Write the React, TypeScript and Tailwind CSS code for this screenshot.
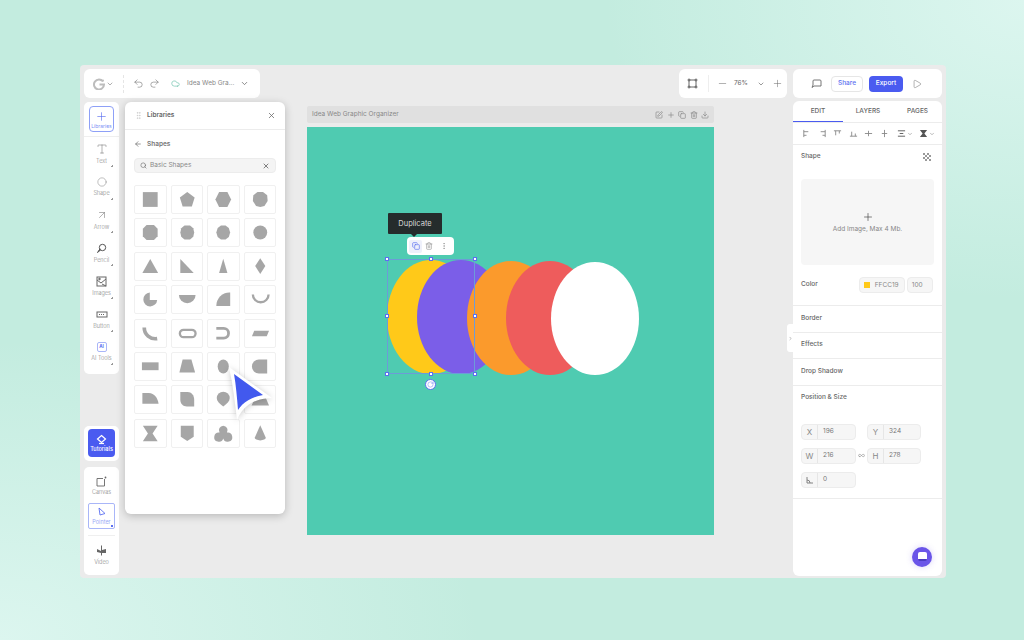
import React from "react";
import { Plus, Type, Circle, ArrowUpRight, X, ArrowLeft, Search, ChevronDown, ChevronRight, Undo2, Redo2, Cloud, Minus, Play, Copy, Trash2, MoreVertical, SquarePen, Download, GripVertical, Infinity as Inf, RotateCw } from "lucide-react";

const G = "#a6a6a6";
const shapes: React.ReactNode[] = [
  <rect x="8.5" y="6.5" width="16" height="16" fill={G} />,
  <polygon points="16.5,6.5 24.5,12.3 21.5,22 11.5,22 8.5,12.3" fill={G} />,
  <polygon points="12,6.5 21,6.5 25,14.5 21,22.5 12,22.5 8,14.5" fill={G} />,
  <polygon points="13.5,6.5 19.5,6.5 24,10 24.5,16 21,21.5 16.5,22.5 12,21.5 8.5,16 9,10" fill={G} />,
  <polygon points="12.5,6.5 20.5,6.5 24.5,10.5 24.5,18.5 20.5,22.5 12.5,22.5 8.5,18.5 8.5,10.5" fill={G} />,
  <polygon points="13.5,7 19.5,7 23,10 24,14.5 23,19 19.5,22 13.5,22 10,19 9,14.5 10,10" fill={G} />,
  <polygon points="14,7 19,7 22.5,9.5 24,14.5 22.5,19.5 19,22 14,22 10.5,19.5 9,14.5 10.5,9.5" fill={G} />,
  <circle cx="16.5" cy="14.5" r="7.5" fill={G} />,
  <polygon points="16.5,6.5 25,21.5 8,21.5" fill={G} />,
  <polygon points="9,6.5 23.5,21.5 9,21.5" fill={G} />,
  <polygon points="16.5,6 21,21.5 12,21.5" fill={G} />,
  <polygon points="16.5,5.5 22,14 16.5,22.5 11,14" fill={G} />,
  <path d="M16 7 A7.5 7.5 0 1 0 24 15 H16 Z" fill={G} />,
  <path d="M7.5 9.5 H25.5 A9 9 0 0 1 7.5 9.5 Z" fill={G} />,
  <path d="M9 21.5 A14 14 0 0 1 24 7 V21.5 Z" fill={G} />,
  <path d="M8.5 9 A8.5 8.5 0 0 0 25.5 9" fill="none" stroke={G} strokeWidth="2.5" />,
  <path d="M10 8 A12 12 0 0 0 24 20" fill="none" stroke={G} strokeWidth="4" />,
  <rect x="8.5" y="10.5" width="17" height="8" rx="4" fill="none" stroke={G} strokeWidth="2.5" />,
  <path d="M9 9 H17 A5.2 5.2 0 0 1 17 19.5 H9" fill="none" stroke={G} strokeWidth="3" />,
  <polygon points="10,11.5 26,11.5 23.5,17.5 7.5,17.5" fill={G} />,
  <rect x="7.5" y="10" width="18" height="8.5" fill={G} />,
  <polygon points="11.5,7 21,7 25,21 8,21" fill={G} />,
  <ellipse cx="16.5" cy="14.5" rx="6" ry="7.5" fill={G} />,
  <path d="M15 7 H24 V22 H15 A7.5 7.5 0 0 1 15 7 Z" fill={G} />,
  <path d="M8 7.5 H15 C21 7.5 24.5 13 25.5 19 H8 Z" fill={G} />,
  <path d="M9 6.5 H17 C21 6.5 24 10 24 15 V22 H16 C12 22 9 19 9 15 Z" fill={G} />,
  <path d="M16.5 22 C12 19 9.5 16.5 9.5 13 A7 7 0 0 1 23.5 13 C23.5 16.5 21 19 16.5 22 Z" fill={G} />,
  <polygon points="14,7 20,7 26,21 7,21" fill={G} />,
  <polygon points="8.5,6 24.5,6 19,14.5 24.5,23 8.5,23 14,14.5" fill={G} />,
  <polygon points="9.5,6 23.5,6 23.5,18 16.5,22.5 9.5,18" fill={G} />,
  <path d="M16.5 6 A5 5 0 0 1 20.5 13.5 A5 5 0 1 1 16.5 20 A5 5 0 1 1 12.5 13.5 A5 5 0 0 1 16.5 6 Z" fill={G} />,
  <path d="M16.5 5.5 L22.5 19 A6 3 0 0 1 10.5 19 Z" fill={G} />,
];

function Tool({ icon, label, corner = true }: { icon: React.ReactNode; label: string; corner?: boolean }) {
  return (
    <div className="relative flex h-[33px] flex-col items-center justify-center gap-[3px] pt-[2px] text-[#666]">
      {icon}
      <span className="text-[5.5px] font-light leading-[7px] text-[#888]">{label}</span>
      {corner && <span className="absolute bottom-[3px] right-[6px] h-[2px] w-[2px] border-b border-r border-[#999]" />}
    </div>
  );
}

function Section({ label }: { label: string }) {
  return (
    <div className="flex h-[26.5px] items-center border-b border-[#ececec] pl-2 text-[6.5px] font-medium text-[#666]">{label}</div>
  );
}

function Field({ k, v, w = "w-[55px]" }: { k: React.ReactNode; v: string; w?: string }) {
  return (
    <div className={`flex h-[16px] items-center rounded-[4px] border border-[#ececec] bg-[#f6f6f6] text-[6.5px] text-[#777] ${w}`}>
      <span className="flex h-full w-[16px] items-center justify-center border-r border-[#e6e6e6] text-[8px] text-[#888]">{k}</span>
      <span className="pl-[5px] pt-[1px]">{v}</span>
    </div>
  );
}

const PencilIcon = (
  <svg width="11" height="11" viewBox="0 0 11 11" fill="none" stroke="#555" strokeWidth="1">
    <circle cx="6.5" cy="4.5" r="3.2" />
    <path d="M4.5 7 L1.5 9.5 L4 5.8" fill="#555" />
  </svg>
);
const ImagesIcon = (
  <svg width="11" height="11" viewBox="0 0 11 11" fill="none" stroke="#666" strokeWidth="1">
    <rect x="1" y="1" width="9" height="9" />
    <path d="M1 4 L5 7 L10 3 M6 8 L10 10" />
    <circle cx="3.5" cy="3" r="0.8" fill="#666" />
  </svg>
);
const ButtonIcon = (
  <svg width="12" height="11" viewBox="0 0 12 11" fill="none" stroke="#666" strokeWidth="1">
    <rect x="1" y="3" width="10" height="5" />
    <path d="M3 5.5 H8" strokeDasharray="1 1" />
  </svg>
);
const CanvasIcon = (
  <svg width="11" height="11" viewBox="0 0 11 11" fill="none" stroke="#666" strokeWidth="0.9">
    <path d="M8.5 3 V10 H1 V2.5 H7" />
    <circle cx="9.5" cy="1.5" r="0.9" fill="#666" stroke="none" />
  </svg>
);
const VideoIcon = (
  <svg width="11" height="11" viewBox="0 0 11 11" fill="#666">
    <path d="M5 0.5 H6 V10.5 H5 Z M1 4 L5 6 V8 L1 7 Z M6 5 L10 4 V8 L6 8 Z" />
  </svg>
);
const TutorialIcon = (
  <svg width="11" height="11" viewBox="0 0 11 11" fill="none" stroke="#fff" strokeWidth="1.2">
    <path d="M5.5 1.5 L9.5 5 L5.5 8.5 L1.5 5 Z" />
    <path d="M3 9.5 H8" />
  </svg>
);
const CommentIcon = (
  <svg width="11" height="11" viewBox="0 0 11 11" fill="none" stroke="#666" strokeWidth="0.9">
    <path d="M3 2 H9 A1 1 0 0 1 10 3 V8 H3 L1 9.5 L2 7 V3 A1 1 0 0 1 3 2 Z" />
  </svg>
);
const FrameIcon = (
  <svg width="11" height="11" viewBox="0 0 11 11" fill="none" stroke="#666" strokeWidth="1">
    <rect x="2" y="2" width="7" height="7" />
    <path d="M0.5 2 H3.5 M2 0.5 V3.5 M7.5 2 H10.5 M9 0.5 V3.5 M0.5 9 H3.5 M2 7.5 V10.5 M7.5 9 H10.5 M9 7.5 V10.5" />
  </svg>
);

export default function App() {
  return (
    <div
      className="relative h-[640px] w-[1024px] overflow-hidden bg-[radial-gradient(ellipse_420px_300px_at_100%_0%,#dcf6ef_0%,rgba(220,246,239,0)_100%),radial-gradient(ellipse_480px_300px_at_0%_100%,#dcf6ef_0%,rgba(220,246,239,0)_100%),linear-gradient(#c3ecdf,#c3ecdf)] pl-[80px] pt-[65px]"
      style={{ fontFamily: "Inter, 'Liberation Sans', sans-serif" }}
    >
      <div className="relative flex h-[513px] w-[866px] flex-col gap-[4px] rounded-[4px] bg-[#ebebeb] px-[4px] pt-[4px]">
        {/* top bar */}
        <div className="flex h-[29px] shrink-0">
          <div className="flex w-[176px] items-center rounded-[6px] bg-white text-[#666]">
            <div className="flex w-[40px] items-center justify-center gap-[1px] border-r border-dashed border-[#e5e5e5] py-[3px]">
              <svg width="12" height="12" viewBox="0 0 24 24" fill="none"><path d="M20 7 A10 10 0 1 0 22 13 H13" stroke="#bdbdbd" strokeWidth="4" /><circle cx="20" cy="5" r="2" fill="#bdbdbd" /></svg>
              <ChevronDown size={8} color="#888" />
            </div>
            <div className="ml-[9px] flex gap-[5px]">
              <Undo2 size={11} strokeWidth={1.2} />
              <Redo2 size={11} strokeWidth={1.2} />
            </div>
            <Cloud size={9} className="ml-[11px]" color="#7cc8b4" strokeWidth={2} />
            <span className="ml-[7px] pt-[1px] text-[6.5px] text-[#888]">Idea Web Gra...</span>
            <ChevronDown size={9} className="ml-[6px]" color="#666" />
          </div>
          <div className="ml-[419px] flex w-[108px] items-center rounded-[6px] bg-white text-[#666]">
            <span className="ml-[8px]">{FrameIcon}</span>
            <div className="ml-[10px] h-[17px] border-l border-[#eee]" />
            <Minus size={11} className="ml-[8px]" strokeWidth={1.1} />
            <span className="ml-[6px] pt-[1px] text-[6.5px] font-normal text-[#666]">76%</span>
            <ChevronDown size={8} className="ml-[9px]" />
            <Plus size={11} className="ml-[7px]" strokeWidth={1.1} />
          </div>
          <div className="ml-[6px] flex w-[149px] items-center rounded-[6px] bg-white text-[#666]">
            <span className="ml-[18px]">{CommentIcon}</span>
            <div className="ml-[9px] flex h-[16px] w-[32px] items-center justify-center rounded-[4px] border border-[#e6e6e6] pt-[1px] text-[6.5px] font-medium text-[#5b6ff0]">Share</div>
            <div className="ml-[6px] flex h-[16px] w-[34px] items-center justify-center rounded-[4px] bg-[#4a5bf0] pt-[1px] text-[6.5px] font-medium text-white">Export</div>
            <Play size={10} className="ml-[9px]" strokeWidth={1.2} />
          </div>
        </div>

        {/* main */}
        <div className="relative flex min-h-0 flex-1">
          {/* left rail */}
          <div className="flex w-[35px] shrink-0 flex-col pb-[2px]">
            <div className="h-[272px] rounded-[5px] bg-white">
              <div className="border-b border-[#efefef] px-[5px] pb-[3.5px] pt-[4px]">
                <div className="flex h-[26px] flex-col items-center justify-center rounded-[4px] border border-[#8ea0f7] text-[#5b6ff0]">
                  <Plus size={13} strokeWidth={1.2} />
                  <span className="text-[5px] leading-[6px] text-[#7d8ff5]">Libraries</span>
                </div>
              </div>
              <div>
                <Tool icon={<Type size={12} strokeWidth={1} />} label="Text" />
                <Tool icon={<Circle size={10} strokeWidth={1} />} label="Shape" />
                <Tool icon={<ArrowUpRight size={12} strokeWidth={1} />} label="Arrow" />
                <Tool icon={PencilIcon} label="Pencil" />
                <Tool icon={ImagesIcon} label="Images" />
                <Tool icon={ButtonIcon} label="Button" />
                <Tool icon={<div className="flex h-[10px] w-[10px] items-center justify-center rounded-[2px] border border-[#a9b6f8] text-[4.5px] font-bold text-[#5b6ff0]">AI</div>} label="AI Tools" />
              </div>
            </div>
            <div className="mt-[52px] h-[35px] rounded-[5px] bg-white px-[4px] py-[3px]">
              <div className="flex h-[28px] flex-col items-center justify-center gap-[1px] rounded-[4px] bg-[#4a5bf0] text-white">
                {TutorialIcon}
                <span className="text-[5.5px] font-medium leading-[7px]">Tutorials</span>
              </div>
            </div>
            <div className="mt-[6px] h-[108px] rounded-[5px] bg-white px-[4px]">
              <div className="flex h-[36px] flex-col items-center justify-center gap-[2px] pt-[1px]">
                {CanvasIcon}
                <span className="text-[5.5px] font-light leading-[7px] text-[#888]">Canvas</span>
              </div>
              <div className="relative flex h-[26px] flex-col items-center justify-center gap-[2px] rounded-[2px] border border-[#a9b6f8]">
                <svg width="9" height="10" viewBox="0 0 9 10" fill="none" stroke="#5b6ff0" strokeWidth="0.9"><path d="M2 1 L8 6.5 L3 8 Z" /></svg>
                <span className="text-[5.5px] leading-[7px] text-[#9aa8f5]">Pointer</span>
                <span className="absolute bottom-[1px] right-[1px] h-[2px] w-[2px] bg-[#5b6ff0]" />
              </div>
              <div className="mt-[6px] flex h-[40px] flex-col items-center justify-center gap-[3px] border-t border-[#efefef]">
                {VideoIcon}
                <span className="text-[5.5px] font-light leading-[7px] text-[#888]">Video</span>
              </div>
            </div>
          </div>

          {/* libraries */}
          <div className="ml-[6px] h-[412px] w-[160px] shrink-0 rounded-[6px] bg-white shadow-[0_2px_8px_rgba(0,0,0,0.22)]">
            <div className="flex h-[28px] items-center border-b border-[#ececec] px-[9px]">
              <GripVertical size={9} color="#ccc" />
              <span className="ml-[4px] pt-[1px] text-[6.5px] font-semibold text-[#666]">Libraries</span>
              <X size={9} className="ml-auto" color="#666" />
            </div>
            <div className="flex h-[28px] items-center pl-[9px]">
              <ArrowLeft size={8} color="#666" />
              <span className="ml-[5px] pt-[1px] text-[6.5px] font-semibold text-[#777]">Shapes</span>
            </div>
            <div className="mx-[9px] flex h-[15px] items-center rounded-[4px] border border-[#ececec] bg-[#f4f4f4] px-[5px]">
              <Search size={7} color="#666" />
              <span className="ml-[3px] pt-[1px] text-[6.5px] text-[#888]">Basic Shapes</span>
              <X size={8} className="ml-auto" color="#444" />
            </div>
            <div className="mx-[9px] mt-[12px] grid w-[142px] grid-cols-4 gap-x-[4px] gap-y-[4.4px]">
              {shapes.map((sh, i) => (
                <div key={i} className="h-[29px] rounded-[2px] border border-[#f0f0f0] bg-white">
                  <svg viewBox="0 0 33 29" className="h-full w-full">{sh}</svg>
                </div>
              ))}
            </div>
          </div>

          {/* canvas column */}
          <div className="ml-[22px] flex w-[407px] shrink-0 flex-col pt-[4px]">
            <div className="flex h-[17px] items-center rounded-[2px] bg-[#e0e0e0] px-[5px] text-[#888]">
              <span className="pt-[1px] text-[6.5px] text-[#888]">Idea Web Graphic Organizer</span>
              <div className="ml-auto flex gap-[3.5px]">
                <SquarePen size={8} />
                <Plus size={8} />
                <Copy size={8} />
                <Trash2 size={8} />
                <Download size={8} />
              </div>
            </div>
            <div className="relative mt-[4px] h-[408px] bg-[#4fcbb1]">
              <div className="absolute left-[80px] top-[133px] h-[114px] w-[88px] rounded-[50%] bg-[#ffc919]" />
              <div className="absolute left-[110px] top-[133px] h-[114px] w-[88px] rounded-[50%] bg-[#7b5ee8]" />
              <div className="absolute left-[160px] top-[134px] h-[114px] w-[88px] rounded-[50%] bg-[#fb9a2c]" />
              <div className="absolute left-[199px] top-[134px] h-[114px] w-[88px] rounded-[50%] bg-[#ee5c5c]" />
              <div className="absolute left-[244px] top-[135px] h-[113px] w-[88px] rounded-[50%] bg-white" />
              {/* selection */}
              <div className="absolute left-[80px] top-[132px] h-[115px] w-[88px] border border-[#6d9bd8]" />
              {[[80, 132], [124, 132], [168, 132], [80, 189], [168, 189], [80, 247], [124, 247], [168, 247]].map(([x, y], i) => (
                <span key={i} className="absolute h-[4px] w-[4px] -translate-x-1/2 -translate-y-1/2 border border-[#5b6ff0] bg-white" style={{ left: x, top: y }} />
              ))}
              <div className="absolute left-[118px] top-[252px] flex h-[11px] w-[11px] items-center justify-center rounded-full border border-[#5b6ff0] bg-white">
                <RotateCw size={7} color="#5b6ff0" strokeWidth={1.5} />
              </div>
              {/* mini toolbar */}
              <div className="absolute left-[100px] top-[110px] flex h-[18px] w-[47px] items-center rounded-[4px] bg-white px-[2px]">
                <div className="flex h-[13px] w-[13px] items-center justify-center rounded-[2px] bg-[#eef0fb]"><Copy size={8} color="#5b6ff0" strokeWidth={2} /></div>
                <Trash2 size={8} color="#999" strokeWidth={2} className="ml-[3px]" />
                <MoreVertical size={8} color="#999" strokeWidth={2} className="ml-[7px]" />
              </div>
              {/* tooltip */}
              <div className="absolute left-[81px] top-[86px] flex h-[21px] w-[54px] items-center justify-center rounded-[1px] bg-[#252c2c] text-[7.5px] text-[#d8d8d8]">Duplicate</div>
              <div className="absolute left-[104px] top-[107px] h-0 w-0 border-x-[3px] border-t-[3px] border-x-transparent border-t-[#252c2c]" />
            </div>
          </div>

          {/* right panel */}
          <div className="ml-[79px] -mt-[1px] flex h-[475px] w-[149px] shrink-0 flex-col rounded-[6px] bg-white">
            <div className="flex h-[22px] shrink-0 border-b border-[#ececec] text-[6.5px] font-medium text-[#666]">
              <div className="flex w-[50px] items-center justify-center border-b border-[#4a5bf0] pt-[1px]">EDIT</div>
              <div className="flex w-[50px] items-center justify-center pt-[1px]">LAYERS</div>
              <div className="flex w-[49px] items-center justify-center pt-[1px]">PAGES</div>
            </div>
            <div className="flex h-[22px] shrink-0 items-center gap-[6.5px] border-b border-[#ececec] pl-[9px] text-[#777]">
              {["M2 1 V9 M2 3 H7 M2 7 H5", "M8 1 V9 M8 3 H3 M8 7 H5", "M1 2 H9 M3 2 V7 M7 2 V5", "M1 8 H9 M3 8 V3 M7 8 V5", "M1 5 H9 M5 2 V8", "M5 1 V9 M2 5 H8"].map((d, i) => (
                <svg key={i} width="9" height="9" viewBox="0 0 10 10" fill="none" stroke="#888" strokeWidth="1"><path d={d} /></svg>
              ))}
              <svg className="ml-[2px]" width="9" height="9" viewBox="0 0 10 10" fill="none" stroke="#555" strokeWidth="1"><path d="M1 2 H9 M1 8 H9 M3 5 H7" /></svg>
              <ChevronDown size={6} className="-ml-[6px]" />
              <svg width="9" height="9" viewBox="0 0 10 10" fill="#555"><path d="M1 1 H9 L6 5 L9 9 H1 L4 5 Z" /></svg>
              <ChevronDown size={6} className="-ml-[6px]" />
            </div>
            <div className="flex h-[24px] shrink-0 items-center justify-between pl-2 pr-[11px] text-[6.5px] font-medium text-[#666]">
              Shape
              <svg width="8" height="8" viewBox="0 0 8 8" fill="#999"><path d="M0 0h2v2H0zM4 0h2v2H4zM2 2h2v2H2zM6 2h2v2H6zM0 4h2v2H0zM4 4h2v2H4zM2 6h2v2H2zM6 6h2v2H6z" /></svg>
            </div>
            <div className="mx-2 mt-[10px] flex h-[86px] shrink-0 flex-col items-center justify-center rounded-[4px] bg-[#f6f6f6] pt-[2px]">
              <Plus size={12} color="#333" strokeWidth={1.2} />
              <span className="mt-[2px] text-[6.5px] text-[#888]">Add Image, Max 4 Mb.</span>
            </div>
            <div className="flex h-[41px] shrink-0 items-center border-b border-[#ececec] pl-2 text-[6.5px] font-medium text-[#666]">
              Color
              <div className="ml-[41px] flex h-[16px] w-[46px] items-center rounded-[4px] border border-[#ececec] bg-[#f6f6f6] pl-[4px]">
                <span className="h-[6px] w-[6px] bg-[#ffc919]" />
                <span className="ml-[5px] pt-[1px] font-normal text-[#888]">FFCC19</span>
              </div>
              <div className="ml-[2px] flex h-[16px] w-[26px] items-center rounded-[4px] border border-[#ececec] bg-[#f6f6f6] pl-[4px] pt-[1px] font-normal text-[#888]">100</div>
            </div>
            <Section label="Border" />
            <Section label="Effects" />
            <Section label="Drop Shadow" />
            <div className="flex h-[113px] shrink-0 flex-col border-b border-[#ececec] px-2">
              <div className="flex h-[24px] items-center text-[6.5px] font-medium text-[#666]">Position &amp; Size</div>
              <div className="mt-[14px] flex items-center gap-[11px]">
                <Field k="X" v="196" />
                <Field k="Y" v="324" w="w-[54px]" />
              </div>
              <div className="mt-[8px] flex items-center">
                <Field k="W" v="216" />
                <Inf size={7} color="#888" className="mx-[2px]" />
                <Field k="H" v="278" w="w-[54px]" />
              </div>
              <div className="mt-[8px]">
                <Field k={<svg width="8" height="8" viewBox="0 0 8 8" fill="none" stroke="#777" strokeWidth="0.9"><path d="M1 1 V7 H7 M1 4 A3 3 0 0 1 4 7" /></svg>} v="0" />
              </div>
            </div>
            <div className="mr-[10px] mt-[48px] flex h-[20px] w-[20px] items-center justify-center self-end rounded-full bg-[#6a55e8] shadow-[0_0_6px_rgba(106,85,232,0.25)]">
              <div className="h-[9px] w-[9px] rounded-[2px] border-b-2 border-[#4a3ac0] bg-white" />
            </div>
          </div>

          {/* collapse handle */}
          <div className="absolute left-[703px] top-[222px] flex h-[28px] w-[6px] items-center justify-center rounded-l-[3px] bg-white">
            <ChevronRight size={5} color="#666" />
          </div>
        </div>
      </div>

      {/* big cursor */}
      <svg className="absolute left-[225px] top-[365px]" width="60" height="65" viewBox="0 0 60 65" style={{ filter: "drop-shadow(0 1px 3px rgba(0,0,0,0.22))" }}>
        <path d="M4 2 L47 33 C31 33 18 40 12 55 C10 38 8 20 4 2 Z" fill="#fff" />
        <path d="M9 9 L38 30 C27 32 18 37 13 45 C12 33 11 20 9 9 Z" fill="#4259ee" />
      </svg>
    </div>
  );
}
